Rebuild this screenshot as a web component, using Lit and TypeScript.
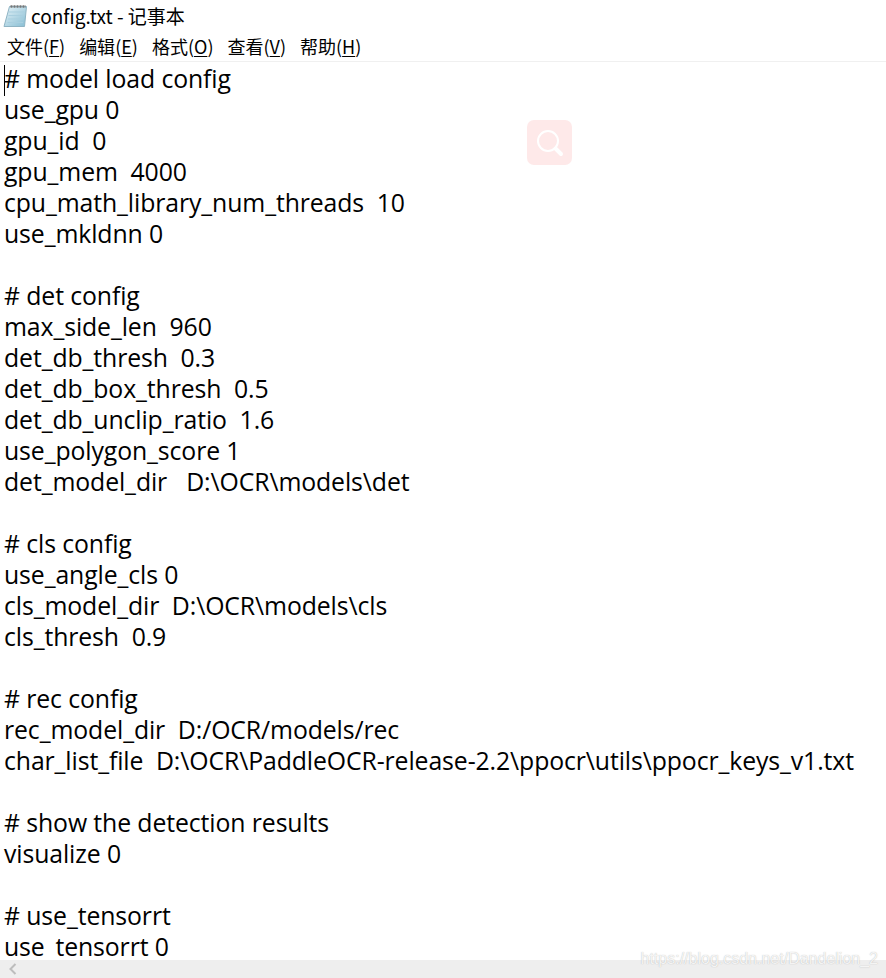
import { LitElement, html, css } from "lit";
import { customElement } from "lit/decorators.js";

const TEXT = String.raw`# model load config
use_gpu 0
gpu_id  0
gpu_mem  4000
cpu_math_library_num_threads  10
use_mkldnn 0

# det config
max_side_len  960
det_db_thresh  0.3
det_db_box_thresh  0.5
det_db_unclip_ratio  1.6
use_polygon_score 1
det_model_dir   D:\OCR\models\det

# cls config
use_angle_cls 0
cls_model_dir  D:\OCR\models\cls
cls_thresh  0.9

# rec config
rec_model_dir  D:/OCR/models/rec
char_list_file  D:\OCR\PaddleOCR-release-2.2\ppocr\utils\ppocr_keys_v1.txt

# show the detection results
visualize 0

# use_tensorrt
use_tensorrt 0`;

const MENUS: [string, string][] = [["文件", "F"], ["编辑", "E"], ["格式", "O"], ["查看", "V"], ["帮助", "H"]];

@customElement("app-root")
export class AppRoot extends LitElement {
  static styles = css`
    :host { display: flex; flex-direction: column; width: 886px; height: 978px; background: #fff; overflow: hidden; position: relative; font-family: "Noto Sans CJK SC", "Open Sans", sans-serif; color: #000; }
    .title { height: 33px; display: flex; align-items: center; gap: 4px; padding: 0 0 2px 3px; box-sizing: border-box; font-size: 19px; flex: none; }
    .menu { height: 29px; display: flex; padding: 0 0 2px 7px; gap: 14px; font-size: 18px; line-height: 24px; align-items: center; border-bottom: 1px solid #f0f0f0; flex: none; box-sizing: border-box; }
    .menu u { text-underline-offset: 2px; }
    .edit { flex: 1; min-height: 0; overflow: hidden; position: relative; padding: 1px 0 0 4px; margin-bottom: 2px; }
    pre { margin: 0; font: inherit; font-size: 24.8px; line-height: 31px; white-space: pre; font-family: "Open Sans", sans-serif; letter-spacing: -0.1px; }
    .caret { position: absolute; left: 4px; top: 3px; width: 1px; height: 31px; background: #000; }
    .scroll { height: 18px; flex: none; background: #eeeeee; display: flex; align-items: center; padding-left: 8px; position: relative; }
    .float { position: absolute; left: 527px; top: 120px; width: 45px; height: 45px; border-radius: 7px; background: #fee9e9; display: flex; align-items: center; justify-content: center; }
    .mark { position: absolute; right: 8px; top: 950px; font-family: "Liberation Sans", sans-serif; font-size: 16px; color: rgba(255,255,255,.85); text-shadow: 0 0 1px rgba(120,120,120,.55); }
  `;

  render() {
    return html`
      <div class="title">
        <svg width="24" height="24" viewBox="0 0 24 24">
          <defs><linearGradient id="g" x1="0" y1="0" x2="1" y2="1"><stop offset="0" stop-color="#e6f3f8"/><stop offset="1" stop-color="#86bdd3"/></linearGradient></defs>
          <path d="M6.5 2.5H23.5L21.5 22.5H1z" fill="url(#g)" stroke="#8fb4c4" stroke-width="1"/>
          <path d="M7.5 2.5H23" stroke="#777" stroke-width="2.5" stroke-dasharray="2 1"/>
          <path d="M6 8H21.5M5.5 11.5H21M5 15H20.5M4.5 18.5H20" stroke="#a9cfdf" stroke-width="1"/>
        </svg>
        <span>config.txt - 记事本</span>
      </div>
      <div class="menu">
        ${MENUS.map(([n, k]) => html`<span>${n}(<u>${k}</u>)</span>`)}
      </div>
      <div class="edit"><pre>${TEXT}</pre><div class="caret"></div></div>
      <div class="scroll">
        <svg width="10" height="12" viewBox="0 0 10 12"><path d="M7.5 1L2.5 6L7.5 11" fill="none" stroke="#bdbdbd" stroke-width="2"/></svg>
      </div>
      <div class="float">
        <svg width="30" height="30" viewBox="0 0 30 30" fill="none" stroke="#fff" stroke-width="2">
          <circle cx="13" cy="13" r="10"/>
          <path d="M20.5 20.5L26 26" stroke-width="4" stroke-linecap="round"/>
        </svg>
      </div>
      <div class="mark">https://blog.csdn.net/Dandelion_2</div>
    `;
  }
}
